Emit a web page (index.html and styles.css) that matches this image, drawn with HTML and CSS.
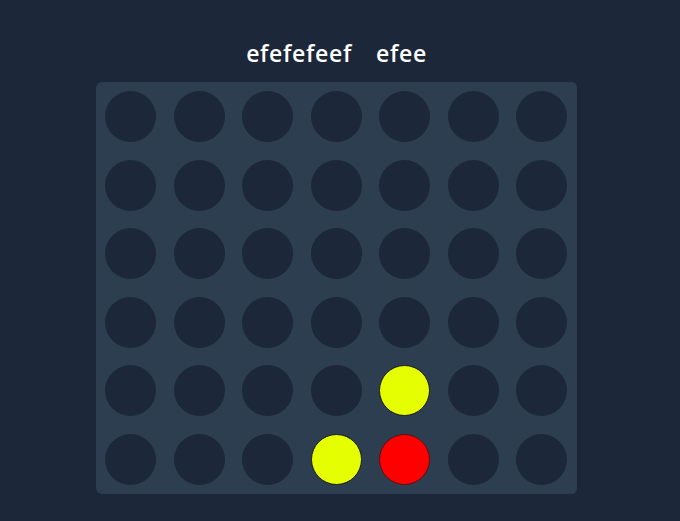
FILE: index.html
```html
<!DOCTYPE html>
<html>
<head>
  <meta charset="UTF-8">
  <meta name="viewport" content="width=device-width, initial-scale=1.0">
  <title>Puissance 4</title>
  <link rel="stylesheet" href="styles.css">
</head>
<body>
  <div class="game">
    <div class="players">
      <span class="player">efefefeef</span>
      <span class="player">efee</span>
    </div>

    <div class="board" id="board"></div>
  </div>

  <script>
    // 6 rows x 7 columns, 0 = empty, 1 = yellow, 2 = red
    const grid = [
      [0, 0, 0, 0, 0, 0, 0],
      [0, 0, 0, 0, 0, 0, 0],
      [0, 0, 0, 0, 0, 0, 0],
      [0, 0, 0, 0, 0, 0, 0],
      [0, 0, 0, 0, 1, 0, 0],
      [0, 0, 0, 1, 2, 0, 0]
    ];

    const board = document.getElementById('board');
    grid.forEach(row => {
      row.forEach(cell => {
        const hole = document.createElement('div');
        hole.className = 'cell';
        if (cell === 1) hole.classList.add('yellow');
        if (cell === 2) hole.classList.add('red');
        board.appendChild(hole);
      });
    });
  </script>
</body>
</html>
```

FILE: styles.css
```css
body {
  margin: 0;
  background: #1c2739;
  font-family: "Open Sans", sans-serif;
  color: #ffffff;
}
.game {
  width: 481px;
  margin-left: 96px;
}
.players {
  display: flex;
  justify-content: center;
  gap: 24px;
  height: 82px;
  box-sizing: border-box;
  padding-top: 38px;
  font-size: 23px;
  font-weight: 600;
  line-height: 30px;
  letter-spacing: 0.7px;
}
.board {
  display: grid;
  grid-template-columns: repeat(7, 51px);
  grid-template-rows: repeat(6, 51px);
  column-gap: 17.5px;
  row-gap: 17.5px;
  padding: 9px;
  background: #2e3e51;
  border-radius: 6px;
}
.cell {
  width: 51px;
  height: 51px;
  border-radius: 50%;
  background: #1c2739;
  box-sizing: border-box;
}
.yellow {
  background: #e5ff00;
  border: 1px solid #1a1a1a;
}
.red {
  background: #ff0000;
  border: 1px solid #5a1010;
}
```
